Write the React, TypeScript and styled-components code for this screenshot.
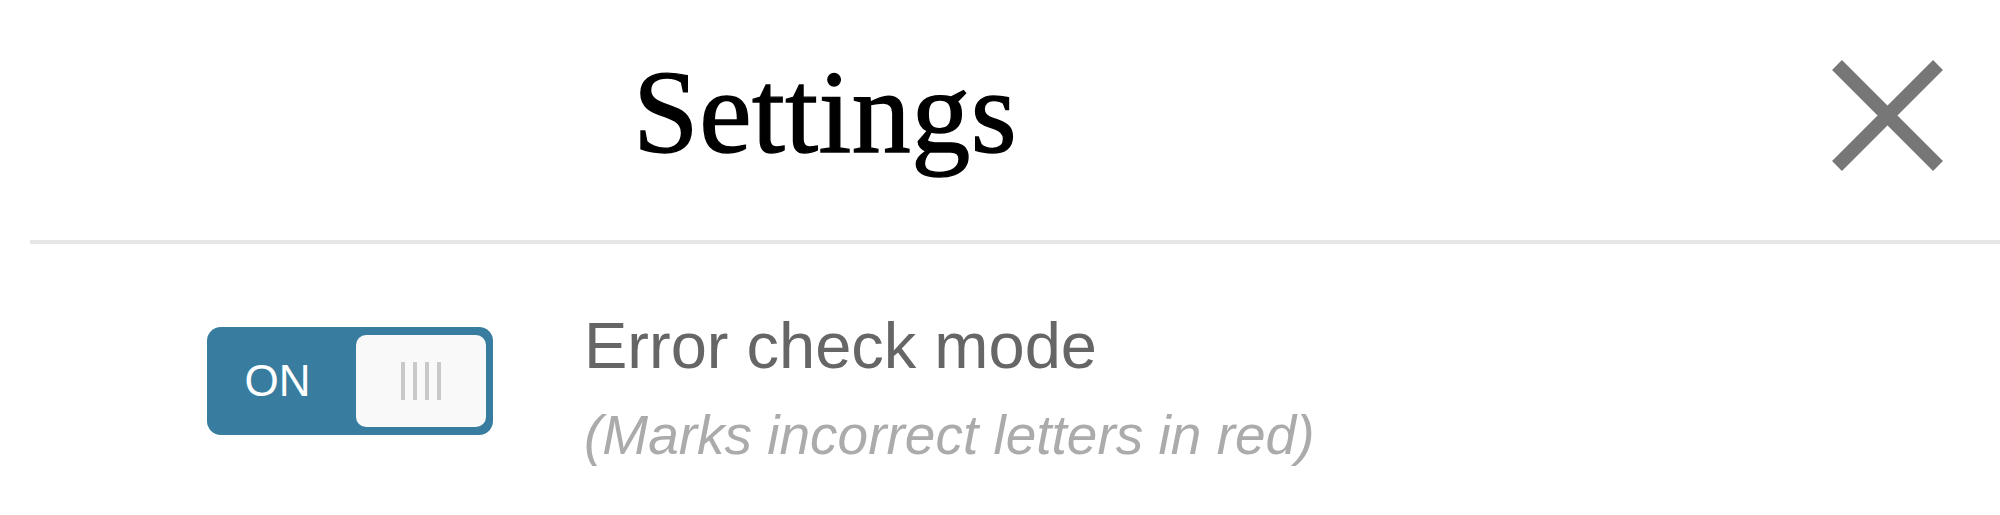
import styled, { createGlobalStyle } from "styled-components";

const GlobalStyle = createGlobalStyle`
  html, body {
    margin: 0;
    padding: 0;
    background: #ffffff;
  }
`;

const Page = styled.div`
  width: 2000px;
  height: 515px;
  padding-left: 30px;
  box-sizing: border-box;
  overflow: hidden;
`;

const Header = styled.header`
  display: flex;
  align-items: flex-start;
  justify-content: space-between;
  height: 240px;
  border-bottom: 4px solid #e6e6e6;
`;

const Title = styled.h1`
  margin: 54px 0 0 603px;
  font-family: "Liberation Serif", "Times New Roman", serif;
  font-weight: 400;
  font-size: 118px;
  line-height: 118px;
  color: #000;
  letter-spacing: 0.5px;
  -webkit-text-stroke: 1.4px #000;
`;

const CloseButton = styled.button`
  margin: 60px 57px 0 0;
  padding: 0;
  width: 111px;
  height: 111px;
  border: none;
  background: none;
  cursor: pointer;
  color: #777777;

  svg {
    display: block;
  }
`;

const SettingRow = styled.div`
  display: flex;
  align-items: flex-start;
  padding-left: 177px;
`;

const Toggle = styled.button<{ $on: boolean }>`
  display: flex;
  align-items: stretch;
  margin-top: 83px;
  width: 286px;
  height: 108px;
  padding: 8px 7px 8px 8px;
  box-sizing: border-box;
  border: none;
  border-radius: 14px;
  background: ${(p) => (p.$on ? "#387da0" : "#bdbdbd")};
  cursor: pointer;
`;

const ToggleLabel = styled.span`
  flex: 1;
  display: flex;
  align-items: center;
  justify-content: center;
  padding-right: 16px;
  font-family: "Liberation Sans", Arial, sans-serif;
  font-size: 44px;
  line-height: 1;
  color: #ffffff;
`;

const Knob = styled.span`
  display: flex;
  align-items: center;
  justify-content: center;
  gap: 8px;
  width: 130px;
  border-radius: 10px;
  background: #f9f9f9;
`;

const Grip = styled.span`
  width: 4px;
  height: 38px;
  background: #c9c9c9;
`;

const TextBlock = styled.div`
  display: flex;
  flex-direction: column;
  margin: 69px 0 0 91px;
`;

const SettingName = styled.div`
  font-family: "Liberation Sans", Arial, sans-serif;
  font-size: 65px;
  line-height: 65px;
  color: #666666;
`;

const SettingHint = styled.div`
  margin-top: 30px;
  font-family: "Liberation Sans", Arial, sans-serif;
  font-style: italic;
  font-size: 55px;
  line-height: 55px;
  color: #ababab;
`;

const CloseIcon = () => (
  <svg width="111" height="111" viewBox="0 0 111 111">
    <path
      d="M5 5 L106 106 M106 5 L5 106"
      stroke="currentColor"
      strokeWidth="14"
      fill="none"
    />
  </svg>
);

const App = () => {
  return (
    <>
      <GlobalStyle />
      <Page>
        <Header>
          <Title>Settings</Title>
          <CloseButton aria-label="Close">
            <CloseIcon />
          </CloseButton>
        </Header>
        <SettingRow>
          <Toggle $on={true} aria-pressed="true">
            <ToggleLabel>ON</ToggleLabel>
            <Knob>
              <Grip />
              <Grip />
              <Grip />
              <Grip />
            </Knob>
          </Toggle>
          <TextBlock>
            <SettingName>Error check mode</SettingName>
            <SettingHint>(Marks incorrect letters in red)</SettingHint>
          </TextBlock>
        </SettingRow>
      </Page>
    </>
  );
};

export default App;
